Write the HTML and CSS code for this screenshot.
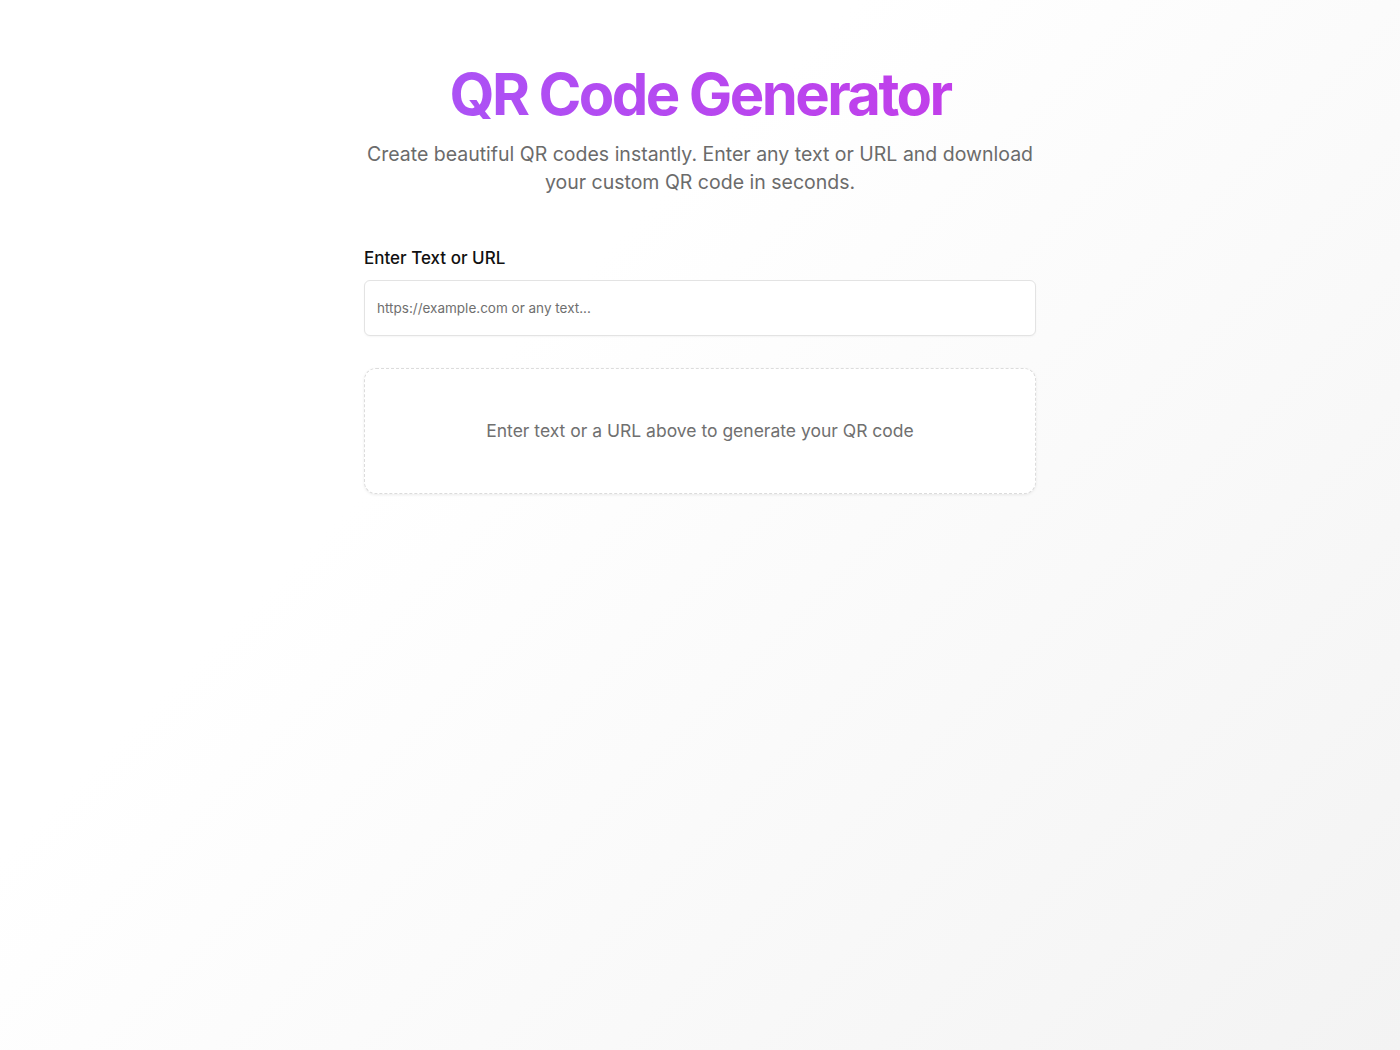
FILE: index.html
```html
<!DOCTYPE html>
<html lang="en">
<head>
<meta charset="utf-8">
<title>QR Code Generator</title>
<link rel="stylesheet" href="styles.css">
</head>
<body>
<main class="page">
  <header class="hero">
    <h1 class="title">QR Code Generator</h1>
    <p class="subtitle">Create beautiful QR codes instantly. Enter any text or URL and download your custom QR code in seconds.</p>
  </header>
  <section class="form">
    <label class="label" for="qr-input">Enter Text or URL</label>
    <input id="qr-input" class="input" type="text" placeholder="https://example.com or any text...">
  </section>
  <section class="preview">
    <p class="preview-text">Enter text or a URL above to generate your QR code</p>
  </section>
</main>
</body>
</html>
```
FILE: styles.css
```css
* { box-sizing: border-box; }
html, body { margin: 0; height: 100%; }
body {
  font-family: Inter, "Open Sans", "Liberation Sans", sans-serif;
  background: linear-gradient(135deg, #ffffff 0%, #ffffff 35%, #f3f3f3 100%);
  min-height: 1050px;
  color: #111;
}
.page {
  width: 672px;
  margin: 0 auto;
  padding-top: 58px;
}
.hero { text-align: center; }
.title {
  margin: 0;
  font-size: 58px;
  line-height: 72px;
  font-weight: 700;
  letter-spacing: -0.045em;
  background: linear-gradient(90deg, #a855f7 0%, #c53be8 100%);
  -webkit-background-clip: text;
  background-clip: text;
  color: transparent;
}
.subtitle {
  margin: 10px 0 0;
  font-size: 19.5px;
  line-height: 28px;
  color: #6b6b6b;
}
.form {
  margin-top: 50px;
  display: flex;
  flex-direction: column;
  gap: 10px;
}
.label {
  font-size: 17px;
  line-height: 24px;
  font-weight: 500;
  color: #111;
}
.input {
  height: 56px;
  width: 100%;
  border: 1px solid #e3e3e3;
  border-radius: 6px;
  padding: 0 12px;
  font-family: inherit;
  font-size: 13.5px;
  color: #111;
  background: #fff;
  box-shadow: 0 1px 2px rgba(0,0,0,0.04);
  outline: none;
}
.input::placeholder { color: #6f6f6f; }
.preview {
  margin-top: 32px;
  height: 126px;
  padding-bottom: 2px;
  border: 1px dashed #dcdcdc;
  border-radius: 12px;
  background: #fff;
  box-shadow: 0 1px 3px rgba(0,0,0,0.08);
  display: flex;
  align-items: center;
  justify-content: center;
}
.preview-text {
  margin: 0;
  font-size: 17.5px;
  color: #707070;
}
```
